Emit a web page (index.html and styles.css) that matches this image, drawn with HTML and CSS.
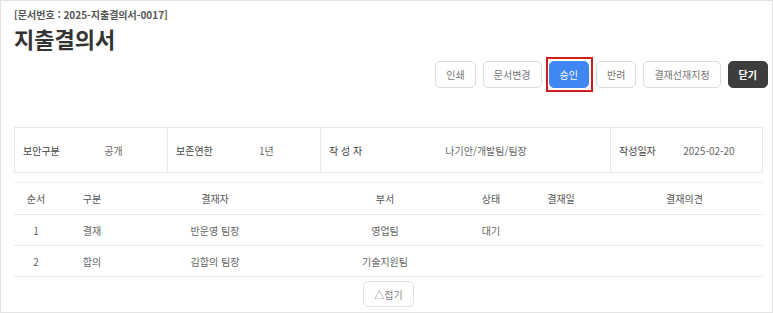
FILE: index.html
```html
<!DOCTYPE html>
<html lang="ko">
  <head>
    <meta charset="utf-8">
    <title>지출결의서</title>
    <link rel="stylesheet" href="styles.css">
  </head>

  <body>
    <div class="doc">
      <div class="docNo">[문서번호 : 2025-지출결의서-0017]</div>
      <h1 class="docTitle">지출결의서</h1>

      <div class="actions">
        <button class="btn">인쇄</button>
        <button class="btn">문서변경</button>
        <button class="btn btnApprove">승인</button>
        <button class="btn">반려</button>
        <button class="btn">결재선재지정</button>
        <button class="btn btnClose">닫기</button>
      </div>

      <div class="info">
        <div class="infoCell">
          <span class="infoLabel">보안구분</span>
          <span class="infoValue">공개</span>
        </div>
        <div class="infoCell">
          <span class="infoLabel">보존연한</span>
          <span class="infoValue">1년</span>
        </div>
        <div class="infoCell">
          <span class="infoLabel">작 성 자</span>
          <span class="infoValue">나기안/개발팀/팀장</span>
        </div>
        <div class="infoCell">
          <span class="infoLabel">작성일자</span>
          <span class="infoValue">2025-02-20</span>
        </div>
      </div>

      <table class="lineTable">
        <colgroup>
          <col class="colNo">
          <col class="colType">
          <col class="colName">
          <col class="colDept">
          <col class="colState">
          <col class="colDate">
          <col>
        </colgroup>
        <thead>
          <tr>
            <th>순서</th>
            <th>구분</th>
            <th>결재자</th>
            <th>부서</th>
            <th>상태</th>
            <th>결재일</th>
            <th>결재의견</th>
          </tr>
        </thead>
        <tbody>
          <tr>
            <td>1</td>
            <td>결재</td>
            <td>반운영 팀장</td>
            <td>영업팀</td>
            <td>대기</td>
            <td></td>
            <td></td>
          </tr>
          <tr>
            <td>2</td>
            <td>합의</td>
            <td>김합의 팀장</td>
            <td>기술지원팀</td>
            <td></td>
            <td></td>
            <td></td>
          </tr>
        </tbody>
      </table>

      <div class="fold">
        <button class="btn btnFold">△접기</button>
      </div>
    </div>
  </body>
</html>
```

FILE: styles.css
```css
html, body {
  margin: 0;
  padding: 0;
  background: #fff;
}

body {
  font-family: "Noto Sans CJK KR", "Noto Sans", sans-serif;
  font-size: 10px;
  color: #555;
}

.doc {
  box-sizing: border-box;
  width: 773px;
  height: 313px;
  border: 1px solid #e2e2e2;
  padding: 7px 9px 0 13px;
}

.docNo {
  font-size: 10px;
  font-weight: bold;
  line-height: 14px;
  color: #555;
}

.docTitle {
  margin: 2px 0 0;
  font-size: 22px;
  line-height: 28px;
  font-weight: bold;
  color: #333;
}

.actions {
  display: flex;
  justify-content: flex-end;
  gap: 7px;
  margin: 9px -5px 0 0;
}

.btn {
  height: 27px;
  padding: 0 10px;
  font-family: inherit;
  font-size: 10px;
  color: #777;
  background: #fff;
  border: 1px solid #dcdcdc;
  border-radius: 5px;
}

.btnApprove {
  position: relative;
  color: #fff;
  background: #3f87f2;
  border-color: #3f87f2;
}

/* 강조 표시 (빨간 사각형) */
.btnApprove::after {
  content: "";
  position: absolute;
  top: -5px;
  right: -5px;
  bottom: -5px;
  left: -4px;
  border: 2px solid #d21c1c;
}

.btnClose {
  color: #fff;
  font-weight: bold;
  background: #3d3d3d;
  border-color: #3d3d3d;
}

.info {
  display: grid;
  grid-template-columns: 152px 153px 290px 1fr;
  height: 46px;
  margin-top: 39px;
  border: 1px solid #e8e8e8;
  box-sizing: border-box;
}

.infoCell {
  display: flex;
  align-items: center;
  border-left: 1px solid #e8e8e8;
}

.infoCell:first-child {
  border-left: none;
}

.infoLabel {
  padding-left: 8px;
  color: #444;
  white-space: nowrap;
}

.infoValue {
  flex: 1;
  text-align: center;
  color: #666;
}

.lineTable {
  width: 100%;
  margin-top: 9px;
  border-collapse: collapse;
  table-layout: fixed;
  border-top: 1px solid #efefef;
}

.colNo { width: 44px; }
.colType { width: 68px; }
.colName { width: 178px; }
.colDept { width: 162px; }
.colState { width: 50px; }
.colDate { width: 90px; }

.lineTable th,
.lineTable td {
  padding: 0;
  text-align: center;
  font-weight: normal;
  color: #666;
  border-bottom: 1px solid #e8e8e8;
}

.lineTable th {
  height: 31px;
  color: #555;
}

.lineTable td {
  height: 30px;
}

.fold {
  display: flex;
  justify-content: center;
  margin-top: 4px;
}

.btnFold {
  height: 26px;
  padding: 0 10px;
  color: #888;
  border-color: #e2e2e2;
}
```
